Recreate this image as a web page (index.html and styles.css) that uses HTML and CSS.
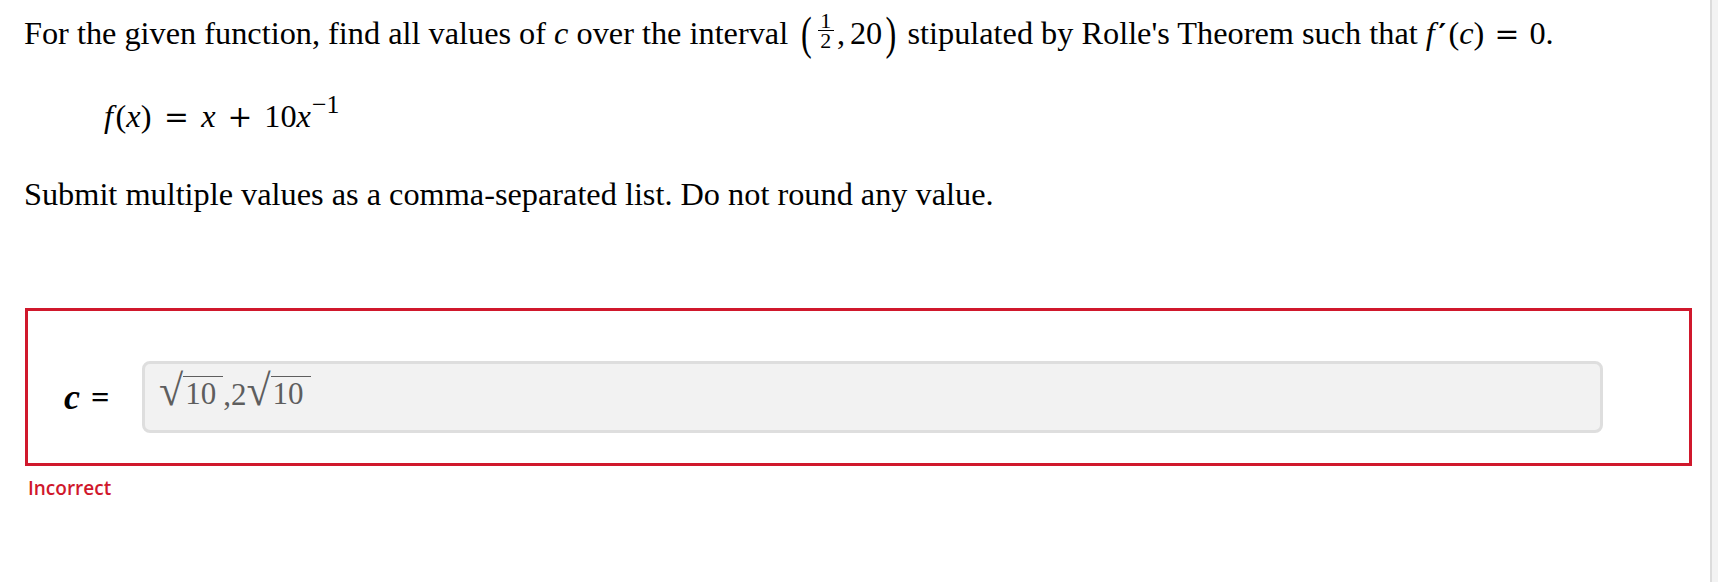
FILE: index.html
```html
<!DOCTYPE html>
<html lang="en">
<head>
<meta charset="utf-8">
<title>Rolle's Theorem</title>
<link rel="stylesheet" href="styles.css">
</head>
<body>
<div class="layout">
  <main class="main">
    <p class="question">For the given function, find all values of <span class="mi">c</span> over the interval <span class="interval"><span class="paren">(</span><span class="frac"><span class="num">1</span><span class="den">2</span></span><span class="comma">,</span>20<span class="paren">)</span></span> stipulated by Rolle's Theorem such that <span class="mi fn">f</span><span class="prime">′</span>(<span class="mi">c</span>)<span class="mo rel">=</span>0.</p>
    <p class="formula"><span class="mi fn">f</span>(<span class="mi">x</span>)<span class="mo rel wide">=</span><span class="mi">x</span><span class="mo bin">+</span>10<span class="mi">x</span><sup class="sup">−1</sup></p>
    <p class="instruction">Submit multiple values as a comma-separated list. Do not round any value.</p>
    <div class="answer-box">
      <div class="answer-row">
        <span class="label"><span class="mi bold">c</span><span class="eq">=</span></span>
        <div class="input">
          <span class="sqrt"><span class="radical">√</span><span class="radicand">10</span></span><span class="plain">,2</span><span class="sqrt"><span class="radical">√</span><span class="radicand">10</span></span>
        </div>
      </div>
    </div>
    <div class="feedback">Incorrect</div>
  </main>
  <div class="gutter"></div>
</div>
</body>
</html>
```
FILE: styles.css
```css
html, body {
  margin: 0;
  padding: 0;
  background: #fff;
}
body {
  font-family: "Liberation Serif", "Times New Roman", serif;
  font-size: 32.3px;
  color: #000;
}
.layout {
  display: flex;
  min-height: 582px;
}
.main {
  flex: 1;
  padding-left: 24px;
  padding-top: 12px;
}
.gutter {
  width: 6px;
  background: #f3f3f3;
  border-left: 2px solid #dcdcdc;
}
p {
  margin: 0;
  line-height: 42px;
  white-space: nowrap;
}
.mi {
  font-style: italic;
}
.fn {
  margin-right: 0.08em;
}
.mo {
  font-family: "DejaVu Serif", serif;
  font-size: 0.92em;
}
.rel {
  margin: 0 0.34em;
}
.wide {
  margin: 0 0.42em;
}
.bin {
  margin: 0 0.4em;
}
.prime {
  font-family: "DejaVu Sans", sans-serif;
  font-weight: bold;
  font-size: 0.9em;
  margin-left: 0.04em;
  margin-right: 0.08em;
}
.interval {
  display: inline-flex;
  align-items: center;
  line-height: 1;
  margin-left: 0.05em;
}
.paren {
  display: inline-block;
  transform: scaleY(1.42);
  margin: 0 0.1em;
}
.frac {
  display: inline-flex;
  flex-direction: column;
  align-items: center;
  font-size: 0.68em;
  line-height: 0.88;
  margin: 0 0.14em 0 0.12em;
  position: relative;
  top: -0.12em;
}
.num {
  border-bottom: 1.3px solid #000;
  padding: 0 0.12em;
}
.comma {
  margin-right: 0.15em;
}
.formula {
  margin-top: 40px;
  padding-left: 80px;
}
.sup {
  font-size: 0.8em;
  vertical-align: 0.55em;
  line-height: 0;
  margin-left: 0.04em;
}
.instruction {
  margin-top: 35px;
}
.answer-box {
  margin-top: 93px;
  margin-left: 1px;
  width: 1661px;
  height: 152px;
  border: 3px solid #d0182c;
  box-sizing: content-box;
}
.answer-row {
  display: flex;
  align-items: center;
  padding-top: 50px;
  padding-left: 36px;
}
.label {
  display: inline-flex;
  align-items: center;
  width: 78px;
  font-size: 36px;
}
.bold {
  font-weight: bold;
}
.eq {
  margin-left: 11px;
  font-weight: bold;
  font-size: 0.9em;
}
.input {
  width: 1441px;
  height: 60px;
  border: 3px solid #dedede;
  border-radius: 8px;
  background: #f2f2f2;
  display: flex;
  align-items: flex-start;
  padding-left: 14px;
  padding-top: 6px;
  box-sizing: content-box;
  color: #5e5e5e;
  font-size: 31px;
  line-height: 36px;
}
.sqrt {
  display: inline-flex;
  align-items: flex-start;
}
.radical {
  font-size: 1.42em;
  line-height: 40px;
  margin-top: 1px;
}
.radicand {
  border-top: 1.5px solid #5e5e5e;
  margin-top: 6px;
  line-height: 34px;
  padding: 0 7px 0 2px;
}
.plain {
  margin-top: 7.5px;
  line-height: 34px;
}
.feedback {
  margin-left: 4px;
  margin-top: 10px;
  font-family: "Open Sans", "Noto Sans", sans-serif;
  font-weight: 600;
  font-size: 19px;
  line-height: 24px;
  color: #d0182c;
}
```
